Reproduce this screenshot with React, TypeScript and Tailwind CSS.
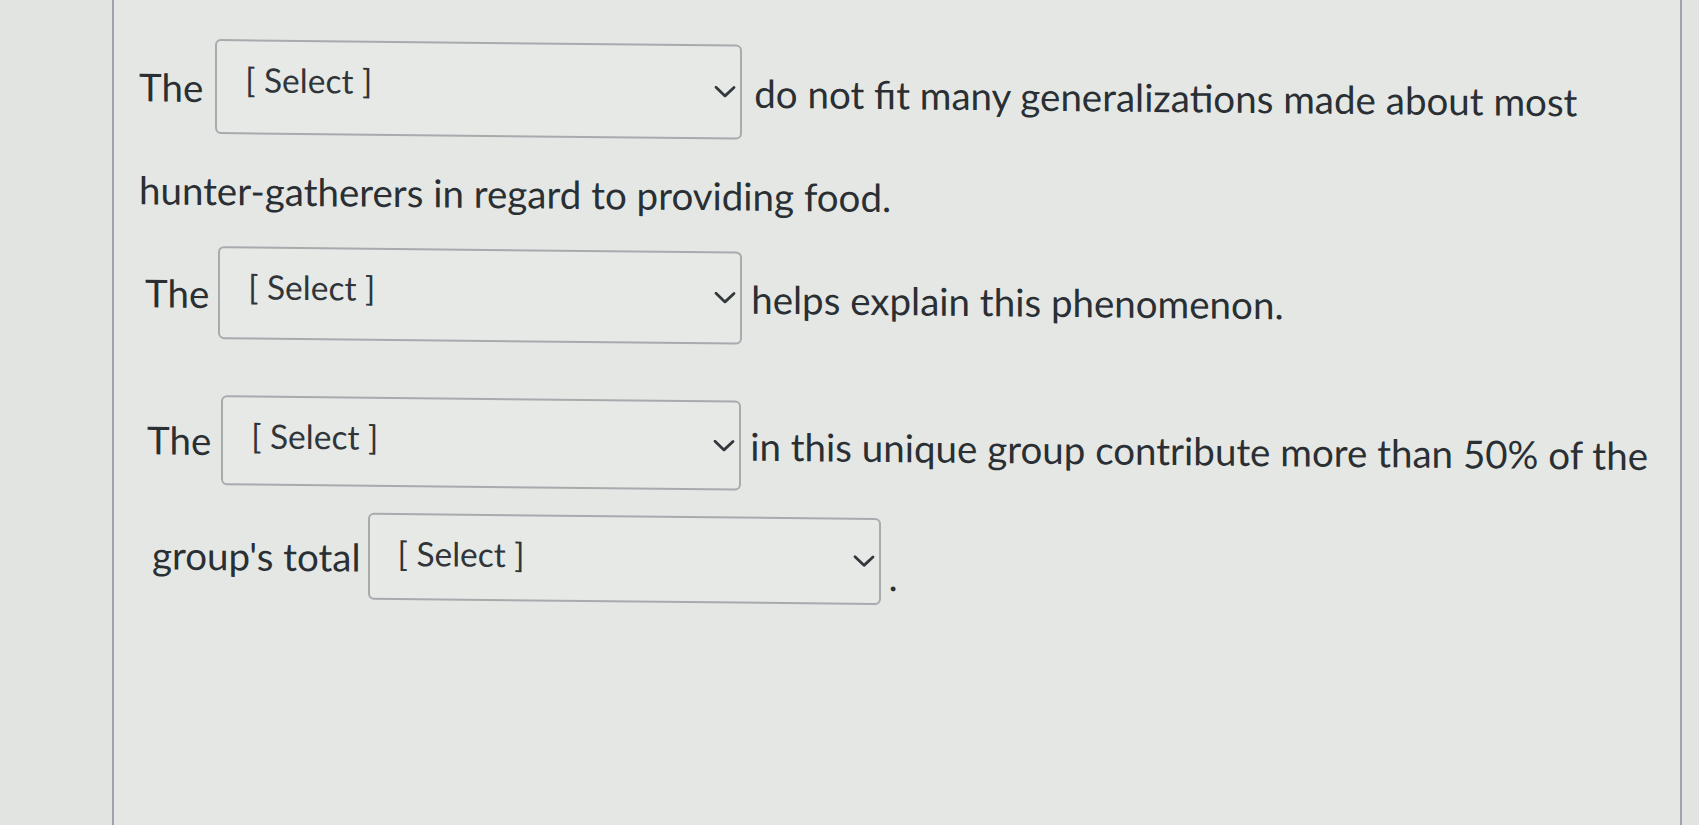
import React from "react";

function Chevron() {
  return (
    <svg width="22" height="13" viewBox="0 0 22 13" fill="none" className="shrink-0">
      <polyline points="2,2 11,10.5 20,2" stroke="#33383d" strokeWidth="2.8" strokeLinecap="round" strokeLinejoin="round" />
    </svg>
  );
}

function SelectBox({ w, h }: { w: number; h: number }) {
  return (
    <div
      className="shrink-0 flex justify-between rounded-[6px] border-2 border-[#a7abae] bg-[#e7e9e6] pl-[28px] pr-[4px]"
      style={{ width: w, height: h }}
    >
      <span className="pt-[18px] text-[33.5px] leading-[40px] text-[#30353a] whitespace-nowrap">[ Select ]</span>
      <div className="flex items-center">
        <Chevron />
      </div>
    </div>
  );
}

export default function App() {
  return (
    <div
      className="w-full h-[825px] overflow-hidden bg-[#e2e4e1] flex"
      style={{ fontFamily: "Lato, 'Open Sans', sans-serif" }}
    >
      <div className="w-[112px] shrink-0" />
      <div className="w-[1570px] h-full border-l-2 border-r-2 border-[#9ea2aa] bg-[#e5e7e4] text-[38.5px] text-[#2a2f34]">
        <div className="origin-left skew-y-[0.6deg]">
          <div className="flex items-center h-[95px] mt-[38px] pl-[25px]">
            <span className="leading-[46px]">The</span>
            <div className="mx-[12px]">
              <SelectBox w={527} h={95} />
            </div>
            <span className="leading-[46px] whitespace-nowrap">do not fit many generalizations made about most</span>
          </div>
          <div className="flex items-center h-[112px] pl-[25px]">
            <span className="leading-[46px] whitespace-nowrap">hunter-gatherers in regard to providing food.</span>
          </div>
          <div className="flex items-center h-[93px] pl-[31px]">
            <span className="leading-[46px]">The</span>
            <div className="ml-[9px] mr-[9px]">
              <SelectBox w={524} h={93} />
            </div>
            <span className="leading-[46px] whitespace-nowrap">helps explain this phenomenon.</span>
          </div>
          <div className="flex items-center h-[90px] mt-[56px] pl-[33px]">
            <span className="leading-[46px]">The</span>
            <div className="ml-[10px] mr-[9px]">
              <SelectBox w={520} h={90} />
            </div>
            <span className="leading-[46px] whitespace-nowrap">in this unique group contribute more than 50% of the</span>
          </div>
          <div className="flex items-center h-[87px] mt-[26px] pl-[38px]">
            <span className="leading-[46px] whitespace-nowrap">group's total</span>
            <div className="ml-[7px] mr-[10px]">
              <SelectBox w={513} h={87} />
            </div>
            <span className="leading-[46px] -ml-[2px] pt-[28px]">.</span>
          </div>
        </div>
      </div>
    </div>
  );
}
